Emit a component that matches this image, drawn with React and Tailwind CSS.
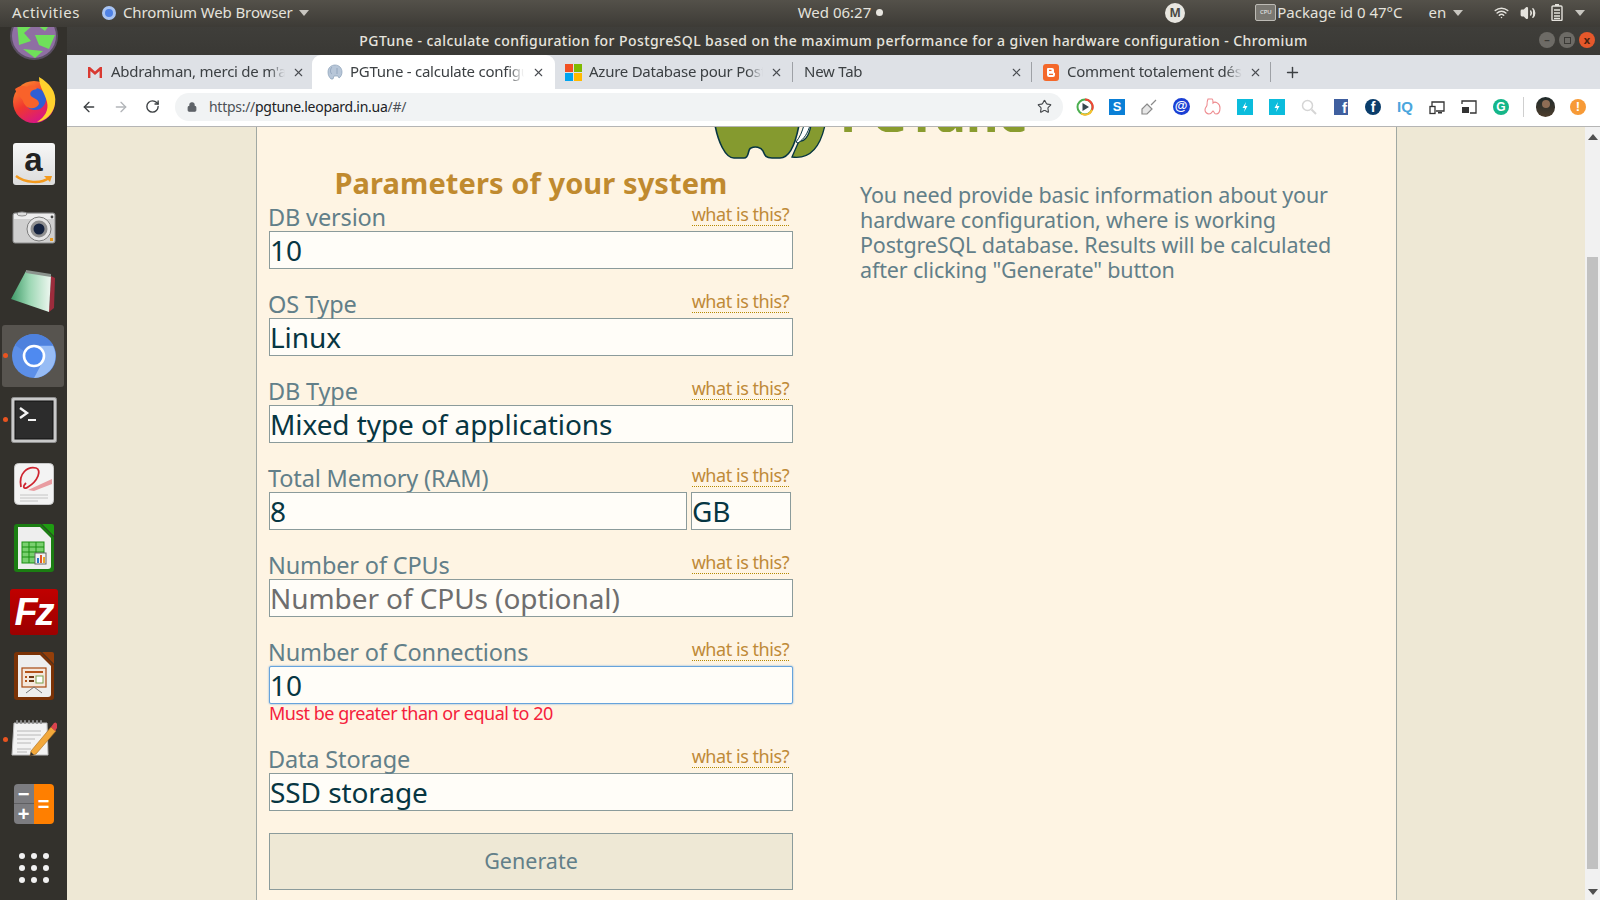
import React from "react";
import { ArrowLeft, ArrowRight, RotateCw, Star, Lock, X, Plus, Wifi, Volume2 } from "lucide-react";

const Tri = ({ up, className = "" }) => (
  <svg width="10" height="6" viewBox="0 0 10 6" className={className}>
    <path d={up ? "M0 6 L5 0 L10 6 Z" : "M0 0 L5 6 L10 0 Z"} fill="currentColor" />
  </svg>
);

/* ---------- dock icons ---------- */
const GlobeIcon = () => (
  <svg width="50" height="50" viewBox="0 0 50 50">
    <circle cx="25" cy="25" r="24" fill="#5b4f63" />
    <circle cx="25" cy="25" r="22" fill="#8f6fa3" />
    <path d="M8 12 L20 4 L24 14 L15 22 L22 30 L10 34 Z M28 4 L42 12 L36 20 L28 14 Z M26 24 L46 24 L40 38 L30 34 Z M14 38 L34 40 L26 47 Z" fill="#6fe05a" />
  </svg>
);
const FirefoxIcon = () => (
  <svg width="46" height="46" viewBox="0 0 46 46">
    <defs>
      <linearGradient id="ff1" x1="0" y1="0" x2="0.6" y2="1">
        <stop offset="0" stopColor="#ff9a2e" />
        <stop offset="0.55" stopColor="#f0382e" />
        <stop offset="1" stopColor="#d6148a" />
      </linearGradient>
    </defs>
    <circle cx="23" cy="25" r="21" fill="url(#ff1)" />
    <circle cx="24" cy="22" r="11" fill="#2f5fd4" />
    <path d="M28 0 C38 6 46 14 44 27 C42 38 34 44 26 45 C34 40 38 33 36 25 C34 16 28 10 28 0 Z" fill="#ffd22e" />
    <path d="M4 12 C8 9 12 8 16 10 C20 7 24 9 26 12 C20 13 18 16 20 19 C23 22 28 22 28 27 C24 34 14 32 12 24 C10 20 6 18 4 12 Z" fill="#f9622a" />
  </svg>
);
const AmazonIcon = () => (
  <div className="w-[42px] h-[42px] rounded-[3px] bg-gradient-to-b from-[#f7f7f7] to-[#dcdcdc] flex flex-col items-center justify-start">
    <span className="font-['Liberation_Sans',sans-serif] font-bold text-[33px] leading-[34px] text-[#222222]">a</span>
    <svg width="38" height="10" viewBox="0 0 38 10" className="-mt-[2px]">
      <path d="M1 1 C10 8 26 9 34 3" fill="none" stroke="#f39a1e" strokeWidth="2.4" />
      <path d="M29 1 L37 1 L35 7 Z" fill="#f39a1e" />
    </svg>
  </div>
);
const CameraIcon = () => (
  <svg width="46" height="34" viewBox="0 0 46 34">
    <rect x="2" y="2" width="42" height="30" rx="2" fill="#cfcfcf" stroke="#8d8d8d" />
    <rect x="3" y="3" width="40" height="5" fill="#ededed" />
    <ellipse cx="11" cy="3" rx="5" ry="2" fill="#dddddd" stroke="#8d8d8d" />
    <circle cx="28" cy="18" r="12" fill="#e4e4e4" stroke="#7c7c7c" />
    <circle cx="28" cy="18" r="8.5" fill="#8f8f8f" />
    <circle cx="28" cy="18" r="5.5" fill="#15233f" />
    <rect x="39" y="27" width="3" height="3" fill="#e89a20" />
    <circle cx="41" cy="6" r="1.4" fill="#444444" />
  </svg>
);
const NotesIcon = () => (
  <svg width="46" height="44" viewBox="0 0 46 44">
    <defs>
      <linearGradient id="note1" x1="0" y1="0" x2="1" y2="0">
        <stop offset="0" stopColor="#3f9a68" />
        <stop offset="0.45" stopColor="#9ad6b2" />
        <stop offset="1" stopColor="#eef7f0" />
      </linearGradient>
    </defs>
    <path d="M40 6 L44 8 L43 38 L38 42 Z" fill="#9c2c3c" />
    <path d="M15 1 L40 6 L38 42 L0 29 Z" fill="url(#note1)" />
    <path d="M15 0 L40 4 L40 7 L15 3 Z" fill="#8b938d" />
  </svg>
);
const ChromiumIcon = () => (
  <svg width="44" height="44" viewBox="0 0 44 44">
    <circle cx="22" cy="22" r="22" fill="#5c8fe8" />
    <path d="M22 12 L41 12 A22 22 0 0 1 22 44 L31 27 Z" fill="#97bcf5" />
    <path d="M3 11 A22 22 0 0 1 41 11 L22 11 A11 11 0 0 0 12 17 Z" fill="#4e81dd" />
    <circle cx="22" cy="22" r="10" fill="#4f8af0" stroke="#ffffff" strokeWidth="2.6" />
  </svg>
);
const TerminalIcon = () => (
  <svg width="46" height="46" viewBox="0 0 46 46">
    <rect x="0.5" y="0.5" width="45" height="45" rx="2" fill="#c9c9c9" stroke="#8f8f8f" />
    <rect x="4" y="4" width="38" height="38" fill="#2c2c2c" stroke="#111111" />
    <path d="M9 11 L16 16 L9 21" fill="none" stroke="#f4f4f4" strokeWidth="2.4" />
    <path d="M17 23 L25 23" stroke="#f4f4f4" strokeWidth="2" />
  </svg>
);
const EvinceIcon = () => (
  <svg width="40" height="42" viewBox="0 0 40 42">
    <rect x="0.5" y="0.5" width="39" height="41" rx="4" fill="#f3f3f3" stroke="#c9c9c9" />
    <path d="M14 27 L38 16 L38 21 L20 28 Z" fill="#e99ca1" />
    <path d="M7 24 C4 10 14 3 22 5 C28 7 24 18 14 24 C10 27 8 24 12 20" fill="none" stroke="#cf2530" strokeWidth="1.8" />
    <path d="M6 32 H34 M6 35 H34 M6 38 H24" stroke="#c4c4c4" strokeWidth="1" />
  </svg>
);
const DocFrame = ({ dark, corner, children }) => (
  <svg width="40" height="48" viewBox="0 0 40 48">
    <path d="M3 0 H27 L40 13 V45 A3 3 0 0 1 37 48 H3 A3 3 0 0 1 0 45 V3 A3 3 0 0 1 3 0 Z" fill={dark} />
    <path d="M28 0 H38 A2 2 0 0 1 40 2 V12 Z" fill={corner} />
    <path d="M4 3 H26 L37 14 V42 A3 3 0 0 1 34 45 H4 Z" fill="#eeeeee" />
    {children}
  </svg>
);
const CalcIcon = () => (
  <DocFrame dark="#1b7d12" corner="#1f9c12">
    <rect x="8" y="18" width="22" height="21" fill="#79d06f" stroke="#1b8f12" />
    <path d="M8 23 H30 M8 28 H30 M8 33 H30 M15 18 V39 M22 18 V39" stroke="#1b8f12" />
    <rect x="21" y="29" width="11" height="11" fill="#f1f1f1" stroke="#666666" />
    <rect x="23" y="34" width="2" height="5" fill="#2e78c7" />
    <rect x="26" y="31" width="2" height="8" fill="#e2572b" />
    <rect x="29" y="33" width="2" height="6" fill="#e5a92b" />
  </DocFrame>
);
const ImpressIcon = () => (
  <DocFrame dark="#7a3206" corner="#943f0a">
    <rect x="8" y="16" width="24" height="19" fill="#f4e7dc" stroke="#a84a12" strokeWidth="1.2" />
    <rect x="11" y="19" width="18" height="2" fill="#b5541a" />
    <rect x="11" y="24" width="2" height="2" fill="#b5541a" />
    <rect x="15" y="24" width="5" height="2" fill="#6b3612" />
    <rect x="11" y="28" width="2" height="2" fill="#b5541a" />
    <rect x="15" y="28" width="5" height="2" fill="#6b3612" />
    <rect x="22" y="24" width="7" height="7" fill="#ffffff" stroke="#7aa04a" />
    <path d="M20 35 L12 41 M20 35 L28 41" stroke="#777777" />
  </DocFrame>
);
const FileZillaIcon = () => (
  <div className="w-[48px] h-[46px] bg-gradient-to-b from-[#c00000] to-[#9c0000] rounded-[3px] flex items-center justify-center">
    <span className="font-['Liberation_Sans',sans-serif] font-bold italic text-[38px] leading-none text-white tracking-[-2px]">Fz</span>
  </div>
);
const GeditIcon = () => (
  <svg width="46" height="42" viewBox="0 0 46 42">
    <path d="M3 4 H36 L37 36 H1 Z" fill="#f3f3f3" stroke="#bdbdbd" />
    <path d="M5 3 H33" stroke="#8a8a8a" strokeWidth="3.5" strokeDasharray="2 2" />
    <path d="M6 12 H30 M6 16 H30 M6 20 H24 M6 24 H20 M6 30 H20 M6 33 H16" stroke="#b8b8b8" />
    <path d="M20 32 L40 8 L45 12 L25 35 L19 37 Z" fill="#f2a83b" stroke="#a56a1c" strokeWidth="0.6" />
    <path d="M40 8 L43 4 A2 2 0 0 1 46 5 L46 9 L44 12 Z" fill="#d9434e" />
    <path d="M20 33 L19 37 L23 36 Z" fill="#333333" />
  </svg>
);
const CalculatorIcon = () => (
  <div className="w-[40px] h-[40px] rounded-[4px] overflow-hidden grid grid-cols-2 grid-rows-2 text-white font-bold text-[20px] leading-none font-['Liberation_Sans',sans-serif]">
    <div className="bg-[#7c7c80] border-b border-[#5f5f62] flex items-center justify-center">−</div>
    <div className="bg-[#ff7f00] row-span-2 flex items-center justify-center">=</div>
    <div className="bg-[#7c7c80] flex items-center justify-center">+</div>
  </div>
);
const DotsIcon = () => (
  <div className="grid grid-cols-3 gap-x-[6px] gap-y-[6px]">
    {Array.from({ length: 9 }).map((_, i) => (
      <span key={i} className="w-[6px] h-[6px] rounded-full bg-[#f1f1f1]" />
    ))}
  </div>
);

const dock = [
  { c: <GlobeIcon /> },
  { c: <FirefoxIcon /> },
  { c: <AmazonIcon /> },
  { c: <CameraIcon /> },
  { c: <NotesIcon /> },
  { c: <ChromiumIcon />, active: true, dot: true },
  { c: <TerminalIcon />, dot: true },
  { c: <EvinceIcon /> },
  { c: <CalcIcon /> },
  { c: <FileZillaIcon /> },
  { c: <ImpressIcon /> },
  { c: <GeditIcon />, dot: true },
  { c: <CalculatorIcon /> },
  { c: <DotsIcon /> },
];

/* ---------- tabs ---------- */
const GmailIcon = () => (
  <svg width="16" height="16" viewBox="0 0 16 16">
    <path d="M1 3 H3 L8 7.5 L13 3 H15 V14 H12.6 V7 L8 11 L3.4 7 V14 H1 Z" fill="#d93a32" />
  </svg>
);
const ElephantFav = () => (
  <svg width="17" height="17" viewBox="0 0 17 17">
    <path d="M2 8 C2 3 6 1 9 1 C13 1 16 4 16 8 C16 10 15 13 13 14 L12 12 L8 12 L7 15 L5 15 C3 13 2 11 2 8 Z" fill="#b7c6d8" stroke="#8ba0b8" strokeWidth="0.7" />
    <path d="M6 3 C4 5 4 9 6 10 M11 4 V10" fill="none" stroke="#8ba0b8" strokeWidth="0.8" />
  </svg>
);
const MsIcon = () => (
  <div className="grid grid-cols-2 gap-[1px] w-[17px] h-[17px]">
    <span className="bg-[#f25022]" />
    <span className="bg-[#7fba00]" />
    <span className="bg-[#00a4ef]" />
    <span className="bg-[#ffb900]" />
  </div>
);
const BloggerIcon = () => (
  <div className="w-[16px] h-[17px] rounded-[3px] bg-[#f4682a] flex items-center justify-center">
    <svg width="10" height="11" viewBox="0 0 10 11">
      <path d="M2 1 H6 A2 2 0 0 1 8 3 V5 A1 1 0 0 0 9 6 V8 A2 2 0 0 1 7 10 H3 A2 2 0 0 1 1 8 V2 A1 1 0 0 1 2 1 Z" fill="#ffffff" />
      <path d="M3 3.4 H5.5 M3 7.4 H7" stroke="#f4682a" strokeWidth="1.2" />
    </svg>
  </div>
);

const TabClose = ({ className = "" }) => <X size={13} strokeWidth={2} className={"text-[#4a4d52] " + className} />;

function Tabs() {
  const textCls =
    "flex-1 overflow-hidden whitespace-nowrap text-[15px] leading-[20px] pb-[2px] tracking-[-0.25px] text-[#3c4043] [mask-image:linear-gradient(to_left,transparent,black_16px)]";
  return (
    <div className="h-[34px] bg-[#dee1e6] flex items-stretch pl-[2px] shrink-0">
      <div className="w-[243px] flex items-center pl-[18px] pr-[7px]">
        <GmailIcon />
        <span className={textCls + " ml-[8px]"}>Abdrahman, merci de m'ajouter</span>
        <TabClose className="ml-[7px]" />
      </div>
      <div className="w-[243px] flex items-center bg-white rounded-t-[9px] pl-[14px] pr-[10px]">
        <ElephantFav />
        <span className={textCls + " ml-[7px]"}>PGTune - calculate configuration</span>
        <TabClose className="ml-[8px]" />
      </div>
      <div className="w-[238px] flex items-center pl-[10px] pr-[9px] border-r border-[#9ea1a6] my-[7px]">
        <MsIcon />
        <span className={textCls + " ml-[7px]"}>Azure Database pour PostgreSQL</span>
        <TabClose className="ml-[7px]" />
      </div>
      <div className="w-[239px] flex items-center pl-[11px] pr-[8px] border-r border-[#9ea1a6] my-[7px]">
        <span className={textCls}>New Tab</span>
        <TabClose />
      </div>
      <div className="w-[239px] flex items-center pl-[11px] pr-[8px] border-r border-[#9ea1a6] my-[7px]">
        <BloggerIcon />
        <span className={textCls + " ml-[8px]"}>Comment totalement désactiver</span>
        <TabClose className="ml-[7px]" />
      </div>
      <div className="flex items-center ml-[13px]">
        <Plus size={17} strokeWidth={2} className="text-[#3c4043]" />
      </div>
    </div>
  );
}

/* ---------- toolbar extensions ---------- */
const ext = [
  <svg width="18" height="18" viewBox="0 0 18 18"><circle cx="9" cy="9" r="7.5" fill="#fff" stroke="#4caf50" strokeWidth="2" /><path d="M9 1.5 A7.5 7.5 0 0 1 16 12" fill="none" stroke="#f44336" strokeWidth="2" /><path d="M16 12 A7.5 7.5 0 0 1 5 15.5" fill="none" stroke="#fbc02d" strokeWidth="2" /><path d="M6.5 5 L13 9 L6.5 13 Z" fill="#37474f" /></svg>,
  <div className="w-[16px] h-[16px] bg-[#0a7fd6] text-white font-bold text-[13px] leading-[16px] text-center font-['Liberation_Sans',sans-serif]">S</div>,
  <svg width="16" height="16" viewBox="0 0 16 16"><path d="M10 6 L15 1 M6 5 L11 10 L6 15 L1 15 L1 10 Z" fill="#e6e6e6" stroke="#8a8a8a" strokeWidth="1.2" /></svg>,
  <div className="w-[17px] h-[17px] rounded-full bg-[#1a3fd4] text-white font-bold text-[13px] leading-[16px] text-center font-['Liberation_Sans',sans-serif]">@</div>,
  <svg width="18" height="18" viewBox="0 0 18 18"><path d="M4 1 H8 C9 1 9 4 9 5 C11 3 16 5 16 10 C16 14 14 16 12 16 C10 16 10 13 9 13 C8 13 8 16 5 16 C3 16 1 14 1 12 C1 9 3 9 3 7 C3 5 3 3 4 1 Z" fill="none" stroke="#ee8a8e" strokeWidth="1.1" /></svg>,
  <svg width="16" height="16" viewBox="0 0 16 16"><rect width="16" height="16" fill="#0bbcdc" /><path d="M9 3 L5.5 9 H8 L7 13 L10.5 7 H8 Z" fill="#ffffff" /></svg>,
  <svg width="16" height="16" viewBox="0 0 16 16"><rect width="16" height="16" fill="#0bbcdc" /><path d="M9 3 L5.5 9 H8 L7 13 L10.5 7 H8 Z" fill="#ffffff" /></svg>,
  <svg width="16" height="16" viewBox="0 0 16 16"><circle cx="6.5" cy="6.5" r="5" fill="#fff" stroke="#d5d5d5" strokeWidth="1.5" /><path d="M10.5 10.5 L15 15" stroke="#d5d5d5" strokeWidth="2" /></svg>,
  <div className="w-[14px] h-[16px] bg-[#3f5f9f] text-white font-bold text-[15px] leading-[18px] text-right pr-[1px] font-['Liberation_Sans',sans-serif]">f</div>,
  <div className="w-[16px] h-[16px] rounded-full bg-[#0a3d6b] text-white font-bold text-[14px] leading-[17px] text-center font-['Liberation_Sans',sans-serif]">f</div>,
  <span className="font-bold text-[15px] leading-none text-[#4aa6dd] font-['Liberation_Sans',sans-serif]">IQ</span>,
  <svg width="16" height="16" viewBox="0 0 16 16"><path d="M3 7 V3 H15 V12 H7" fill="none" stroke="#333" strokeWidth="1.3" /><rect x="1" y="7.5" width="5" height="7" fill="#fff" stroke="#333" strokeWidth="1.3" /><rect x="9" y="13" width="4" height="1.5" fill="#333" /></svg>,
  <svg width="16" height="14" viewBox="0 0 16 14"><path d="M1 4 V1 H15 V13 H9" fill="none" stroke="#333" strokeWidth="1.3" /><rect x="1" y="7" width="7" height="6" fill="#333" /></svg>,
  <div className="w-[16px] h-[16px] rounded-full bg-[#15b689] text-white font-bold text-[12px] leading-[16px] text-center font-['Liberation_Sans',sans-serif]">G</div>,
];

function Toolbar() {
  return (
    <div className="h-[38px] bg-white border-b border-[#b5b5b5] flex items-center shrink-0 pb-[2px]">
      <div className="w-[108px] pl-[14px] flex items-center gap-[16px] text-[#5f6368]">
        <ArrowLeft size={16} strokeWidth={2} className="text-[#3c4043]" />
        <ArrowRight size={16} strokeWidth={2} className="text-[#b2b5b9]" />
        <RotateCw size={15} strokeWidth={2.2} className="text-[#3c4043]" />
      </div>
      <div className="w-[888px] h-[28px] rounded-full bg-[#f1f3f4] flex items-center pl-[12px] pr-[11px]">
        <Lock size={10} strokeWidth={3} fill="#5f6368" className="text-[#5f6368]" />
        <span className="ml-[12px] flex-1 text-[14px] tracking-[-0.28px] text-[#4d5156]">
          https://<span className="text-[#202124]">pgtune.leopard.in.ua</span>/#/
        </span>
        <Star size={15} strokeWidth={1.8} className="text-[#45484c]" />
      </div>
      <div className="ml-[6px] flex items-center">
        {ext.map((e, i) => (
          <div key={i} className="w-[32px] flex justify-center items-center">
            {e}
          </div>
        ))}
        <div className="w-[1px] h-[20px] bg-[#cfcfcf] ml-[6px]" />
        <div className="ml-[12px] w-[19px] h-[20px] rounded-full bg-gradient-to-b from-[#1f2a2a] to-[#4d3d2c] flex justify-center pt-[3px]">
          <div className="w-[8px] h-[8px] rounded-full bg-[#8e6d55]" />
        </div>
        <div className="ml-[15px] w-[16px] h-[16px] rounded-full bg-[#f79a36] text-white font-bold text-[13px] leading-[16px] text-center font-['Liberation_Sans',sans-serif]">
          !
        </div>
      </div>
    </div>
  );
}

/* ---------- form ---------- */
const inputCls =
  "block h-[38px] border border-[#8b9b9b] bg-[#fffdf8] pl-0 text-[28px] tracking-[-0.08px] text-[#073642] outline-none placeholder:text-[#6e6e6e]";

function Group({ label, children, error }) {
  return (
    <div className={error ? "mb-[37px]" : "mb-[17px]"}>
      <div className="h-[32px] flex items-end justify-between pr-[4px]">
        <span className="text-[23.5px] leading-[28px] text-[#627f89] tracking-[-0.15px] -ml-[1px]">{label}</span>
        <a className="mb-[5px] text-[18px] leading-[22px] tracking-[-0.45px] text-[#bf8a38] border-b border-dotted border-[#b58900]">what is this?</a>
      </div>
      {children}
      {error && <div className="h-0 text-[18px] leading-[18px] tracking-[-0.5px] text-[#f5213c]">{error}</div>}
    </div>
  );
}

export default function App() {
  return (
    <div className="w-[1600px] h-[900px] overflow-hidden flex flex-col bg-[#33312c] font-['Noto_Sans',sans-serif]">
      {/* top bar */}
      <div className="h-[27px] shrink-0 bg-gradient-to-b from-[#54514a] to-[#3d3b36] flex items-center pb-[2px] text-[15px] text-[#e4e2dc]">
        <span className="ml-[12px] tracking-[0.55px]">Activities</span>
        <span className="ml-[22px] w-[14px] h-[14px] rounded-full bg-[#4f82e6] border-[3px] border-[#a9c4f2]" />
        <span className="ml-[7px] tracking-[-0.12px]">Chromium Web Browser</span>
        <Tri className="ml-[6px] text-[#c8c6c0]" />
        <span className="ml-[489px]">Wed 06:27</span>
        <span className="ml-[5px] w-[7px] h-[7px] rounded-full bg-[#e8e6e0]" />
        <span className="ml-[282px] w-[20px] h-[20px] rounded-full bg-[#e8e6e0] text-[#4c4a45] text-[12px] font-bold leading-[20px] text-center">M</span>
        <span className="ml-[70px] w-[21px] h-[17px] rounded-[2px] border border-[#bdbbb5] bg-[#7a7872] text-[6px] leading-[15px] text-center text-[#eeeeee]">CPU</span>
        <span className="ml-[1px]">Package id 0 47°C</span>
        <span className="ml-[26px]">en</span>
        <Tri className="ml-[7px] text-[#c8c6c0]" />
        <Wifi size={15} strokeWidth={2.4} className="ml-[31px] text-[#e4e2dc]" />
        <Volume2 size={16} strokeWidth={2.2} fill="#e4e2dc" className="ml-[11px] text-[#e4e2dc]" />
        <svg width="12" height="17" viewBox="0 0 12 17" className="ml-[15px]">
          <rect x="4" y="0" width="4" height="2" fill="#e4e2dc" />
          <rect x="1" y="2" width="10" height="14.5" rx="1" fill="none" stroke="#e4e2dc" strokeWidth="1.4" />
          <path d="M3 6 H9 M3 9 H9 M3 12 H9 M3 14.5 H9" stroke="#e4e2dc" strokeWidth="1.6" />
        </svg>
        <Tri className="ml-[12px] text-[#c8c6c0]" />
      </div>

      <div className="flex-1 flex min-h-0">
        {/* dock */}
        <div className="w-[67px] shrink-0 bg-[#33312c] overflow-hidden">
          <div className="-mt-[23px]">
            {dock.map((d, i) => (
              <div key={i} className="relative h-[64px] flex items-center justify-center">
                {d.active && <div className="absolute left-[2px] right-[3px] top-[1px] bottom-[1px] rounded-[3px] bg-[#57544f]" />}
                {d.dot && <span className="absolute left-[3px] top-[29px] w-[5px] h-[5px] rounded-full bg-[#e95420]" />}
                <div className="relative">{d.c}</div>
              </div>
            ))}
          </div>
        </div>

        {/* browser window */}
        <div className="flex-1 min-w-0 flex flex-col">
          <div className="h-[28px] shrink-0 bg-gradient-to-b from-[#3f3e3a] to-[#3a3935] flex items-center justify-center pb-[2px] relative">
            <span className="text-[14px] font-medium text-[#e6e4de] tracking-[0.43px]">
              PGTune - calculate configuration for PostgreSQL based on the maximum performance for a given hardware configuration - Chromium
            </span>
            <div className="absolute right-[5px] top-[5px] flex gap-[4px]">
              <span className="w-[16px] h-[16px] rounded-full bg-[#6d6b66] text-[#3a3935] text-[11px] font-bold leading-[15px] text-center">–</span>
              <span className="w-[16px] h-[16px] rounded-full bg-[#6d6b66] flex items-center justify-center">
                <span className="w-[7px] h-[7px] border border-[#3a3935]" />
              </span>
              <span className="w-[16px] h-[16px] rounded-full bg-[#e5582b] text-[#4b2210] text-[11px] font-bold leading-[15px] text-center">x</span>
            </div>
          </div>
          <Tabs />
          <Toolbar />

          {/* page */}
          <div className="flex-1 min-h-0 flex bg-[#eee8d5]">
            <div className="flex-1 min-w-0 overflow-hidden pl-[189px]">
              <div className="w-[1141px] h-full bg-[#fef4e3] border-x border-[#a0a8a3] flex flex-col">
                {/* clipped logo */}
                <div className="h-[36px] shrink-0 flex items-start overflow-hidden">
                  <svg width="112" height="34" viewBox="0 0 112 34" className="ml-[457px] shrink-0">
                    <path d="M78 30 C92 32 105 26 111 -2 L97 -2 C95 10 90 15 85 14 Z" fill="#859a2f" stroke="#073642" strokeWidth="1.3" />
                    <path d="M84 16 C90 12 94 6 96 -2 L90 -2 C88 5 86 10 82 15 Z" fill="#ffffff" stroke="#073642" strokeWidth="1" />
                    <path d="M1 -2 C4 14 11 31 20 31 L30 31 C36 31 33 22 37 21 C41 19 47 20 49 24 C51 29 52 31 58 31 L66 31 C76 31 82 14 85 -2 Z" fill="#859a2f" stroke="#073642" strokeWidth="1.6" />
                  </svg>
                  <div className="ml-[14px] h-[5px] overflow-hidden flex items-end">
                    <span className="text-[50px] font-bold leading-[50px] text-[#8a9c2f] -mb-[6px]">PGTune</span>
                  </div>
                </div>

                <div className="flex-1 min-h-0 flex">
                  {/* left column */}
                  <div className="w-[537px] pl-[12px] shrink-0">
                    <h1 className="h-[36px] text-[29px] leading-[40px] font-bold text-[#c08a2f] text-center w-[524px] tracking-[0.1px]">Parameters of your system</h1>
                    <div className="w-[524px]">
                      <Group label="DB version">
                        <input readOnly value="10" className={inputCls + " w-full"} />
                      </Group>
                      <Group label="OS Type">
                        <input readOnly value="Linux" className={inputCls + " w-full"} />
                      </Group>
                      <Group label="DB Type">
                        <input readOnly value="Mixed type of applications" className={inputCls + " w-full"} />
                      </Group>
                      <Group label="Total Memory (RAM)">
                        <div className="flex gap-[4px]">
                          <input readOnly value="8" className={inputCls + " w-[418px]"} />
                          <input readOnly value="GB" className={inputCls + " w-[100px]"} />
                        </div>
                      </Group>
                      <Group label="Number of CPUs">
                        <input readOnly placeholder="Number of CPUs (optional)" className={inputCls + " w-full"} />
                      </Group>
                      <Group label="Number of Connections" error="Must be greater than or equal to 20">
                        <input readOnly value="10" className="block w-full h-[38px] rounded-[2px] border border-[#66a3dc] [box-shadow:0_0_2px_#66a3dc] bg-[#fffdf8] pl-0 text-[28px] text-[#073642] outline-none" />
                      </Group>
                      <Group label="Data Storage">
                        <input readOnly value="SSD storage" className={inputCls + " w-full"} />
                      </Group>
                      <button className="block w-full h-[57px] mt-[22px] border border-[#8b9b9b] bg-[#eee8d5] text-[21.5px] text-[#627f89]">Generate</button>
                    </div>
                  </div>

                  {/* right column */}
                  <div className="flex-1 min-w-0 pl-[66px]">
                    <p className="mt-[19px] w-[490px] text-[21.5px] leading-[25px] text-[#627f89] tracking-[-0.15px]">
                      You need provide basic information about your hardware configuration, where is working PostgreSQL database. Results will be calculated after clicking "Generate" button
                    </p>
                  </div>
                </div>
              </div>
            </div>

            {/* scrollbar */}
            <div className="w-[15px] shrink-0 bg-[#f1f1f1] flex flex-col items-center text-[#505050]">
              <Tri up className="mt-[7px] shrink-0" />
              <div className="mt-[117px] w-[11px] h-[612px] bg-[#c1c1c1] shrink-0" />
              <Tri className="mt-[20px] shrink-0" />
            </div>
          </div>
        </div>
      </div>
    </div>
  );
}
